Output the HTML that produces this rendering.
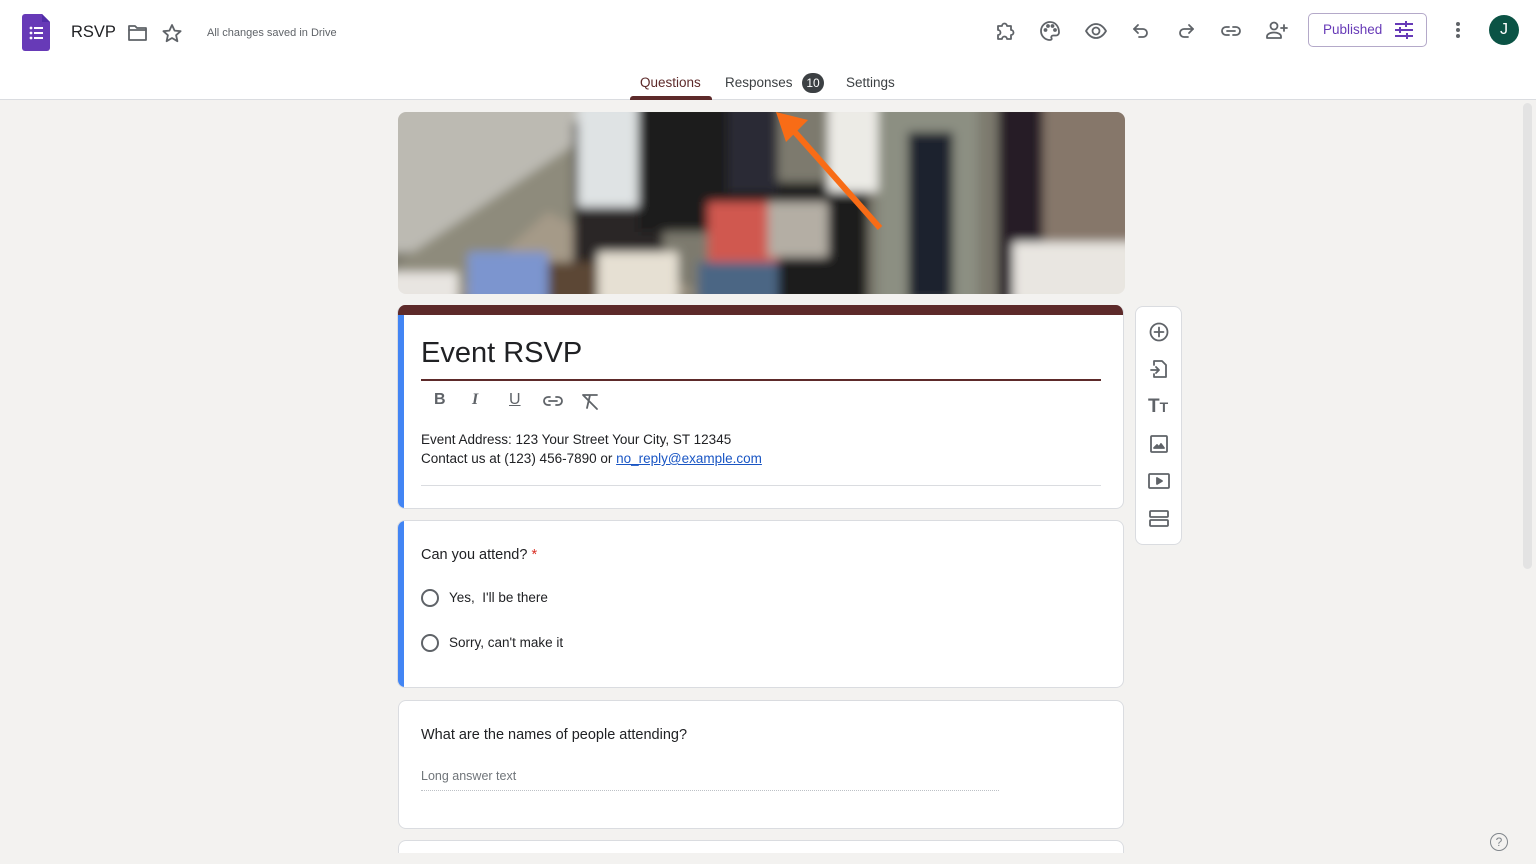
<!DOCTYPE html>
<html><head><meta charset="utf-8"><style>
*{box-sizing:border-box;margin:0;padding:0}
body{width:1536px;height:864px;overflow:hidden;background:#f3f2f0;font-family:"Liberation Sans",Arial,sans-serif;color:#202124;position:relative}
.top{position:absolute;left:0;top:0;width:1536px;height:100px;background:#fff;border-bottom:1px solid #dadce0}
.abs{position:absolute}
.ic{position:absolute;fill:none;stroke:#5f6368;stroke-width:1.8;stroke-linecap:round;stroke-linejoin:round}
.card{position:absolute;background:#fff;border:1px solid #dadce0;border-radius:8px;overflow:hidden}
.tab{position:absolute;top:75px;font-size:13.5px;color:#3c4043}
.radio{position:absolute;width:18px;height:18px;border:2px solid #5f6368;border-radius:50%}
</style></head><body>
<div class="top">
 <svg class="abs" style="left:22px;top:14px" width="28" height="37" viewBox="0 0 28 37"><path d="M3 0h17l8 8v26a3 3 0 0 1-3 3H3a3 3 0 0 1-3-3V3a3 3 0 0 1 3-3z" fill="#673ab7"/><path d="M20 0v8h8z" fill="#512da8"/><g fill="#fff"><circle cx="9" cy="14" r="1.4"/><circle cx="9" cy="19" r="1.4"/><circle cx="9" cy="24" r="1.4"/><rect x="12" y="13" width="9" height="2"/><rect x="12" y="18" width="9" height="2"/><rect x="12" y="23" width="9" height="2"/></g></svg>
 <div class="abs" style="left:71px;top:23px;font-size:16.5px">RSVP</div>
 <svg class="ic" style="left:127px;top:24px" width="22" height="18" viewBox="0 0 22 18"><path d="M2 2h6l2 2h9v12H2z"/><path d="M2 6h17"/></svg>
 <svg class="ic" style="left:161px;top:23px" width="22" height="20" viewBox="0 0 22 20"><path d="M11 2l2.6 5.6 6 .6-4.5 4 1.3 6L11 15l-5.4 3.2 1.3-6-4.5-4 6-.6z"/></svg>
 <div class="abs" style="left:207px;top:27px;font-size:11px;color:#5f6368">All changes saved in Drive</div>

 <svg class="ic" style="left:994px;top:20px" width="22" height="22" viewBox="0 0 22 22"><path d="M4 6h4a2.5 2.5 0 0 1 5 0h4v4a2.5 2.5 0 0 1 0 5v4h-4a2.5 2.5 0 0 0-5 0H4v-4a2.5 2.5 0 0 0 0-5z"/></svg>
 <svg class="ic" style="left:1039px;top:20px" width="22" height="22" viewBox="0 0 22 22"><path d="M11 2a9 9 0 0 0 0 18c1.5 0 2-1 1.5-2-.6-1 0-2.5 1.5-2.5H17a3 3 0 0 0 3-3C20 6 16 2 11 2z"/><circle cx="6.5" cy="10" r="1"/><circle cx="9" cy="6" r="1"/><circle cx="13.5" cy="6" r="1"/><circle cx="16" cy="10" r="1"/></svg>
 <svg class="ic" style="left:1084px;top:20px" width="24" height="22" viewBox="0 0 24 22"><path d="M2 11c3-5 6-7 10-7s7 2 10 7c-3 5-6 7-10 7s-7-2-10-7z"/><circle cx="12" cy="11" r="3.5"/></svg>
 <svg class="ic" style="left:1130px;top:20px" width="22" height="22" viewBox="0 0 22 22"><path d="M8 5L4 9l4 4"/><path d="M4 9h9a4 4 0 0 1 0 8H9"/></svg>
 <svg class="ic" style="left:1175px;top:20px" width="22" height="22" viewBox="0 0 22 22"><path d="M14 5l4 4-4 4"/><path d="M18 9H9a4 4 0 0 0 0 8h4"/></svg>
 <svg class="ic" style="left:1220px;top:20px" width="22" height="22" viewBox="0 0 22 22"><path d="M9 7H6a4 4 0 0 0 0 8h3M13 7h3a4 4 0 0 1 0 8h-3M7 11h8"/></svg>
 <svg class="ic" style="left:1264px;top:19px" width="26" height="22" viewBox="0 0 26 22"><circle cx="10" cy="7" r="3.5"/><path d="M3 19v-1.5c0-2.5 3.5-4 7-4s7 1.5 7 4V19z"/><path d="M20 6v6M17 9h6"/></svg>
 <div class="abs" style="left:1308px;top:13px;width:119px;height:34px;border:1px solid #b4a9c9;border-radius:5px;color:#673ab7;font-size:13.5px;padding:8px 0 0 14px">Published</div>
 <svg class="abs" style="left:1394px;top:21px" width="20" height="18" viewBox="0 0 20 18" stroke="#673ab7" stroke-width="2"><path d="M1 3h18M1 9h18M1 15h18"/><path d="M12 0v6M6 6v6M13 12v6"/></svg>
 <svg class="abs" style="left:1455px;top:21px" width="6" height="18"><g fill="#5f6368"><circle cx="3" cy="3" r="2"/><circle cx="3" cy="9" r="2"/><circle cx="3" cy="15" r="2"/></g></svg>
 <div class="abs" style="left:1489px;top:15px;width:30px;height:30px;border-radius:50%;background:#0b5345;color:#fff;font-size:16px;text-align:center;line-height:30px">J</div>

 <div class="tab" style="left:640px;color:#5d2a2a">Questions</div>
 <div class="abs" style="left:630px;top:96px;width:82px;height:4px;background:#5d2a2a;border-radius:3px 3px 0 0"></div>
 <div class="tab" style="left:725px">Responses</div>
 <div class="abs" style="left:802px;top:73px;width:22px;height:20px;border-radius:10px;background:#3c4043;color:#fff;font-size:12px;text-align:center;line-height:20px">10</div>
 <div class="tab" style="left:846px">Settings</div>
</div>

<div class="abs" style="left:1523px;top:103px;width:9px;height:466px;background:#e3e3e3;border-radius:5px"></div>

<!-- header image -->
<svg class="abs" style="left:398px;top:112px;border-radius:8px" width="727" height="182" viewBox="0 0 727 182">
<defs><filter id="b" x="0" y="0" width="100%" height="100%"><feGaussianBlur stdDeviation="5"/></filter></defs>
<g filter="url(#b)">
<rect x="-20" y="-20" width="767" height="222" fill="#7d7a6e"/>
<rect x="-20" y="-20" width="200" height="160" fill="#bcbab2"/>
<polygon points="0,150 180,30 200,182 0,182" fill="#8e8b7c"/>
<polygon points="60,182 150,100 300,182" fill="#a59a88"/>
<rect x="175" y="10" width="90" height="170" fill="#2a2728"/>
<rect x="180" y="-10" width="60" height="105" fill="#dfe3e4"/>
<rect x="240" y="-10" width="100" height="130" fill="#1e1b1c"/>
<rect x="330" y="70" width="140" height="122" fill="#1c1a1b"/>
<rect x="310" y="90" width="70" height="110" fill="#d0584f"/>
<rect x="300" y="150" width="80" height="42" fill="#4b6684"/>
<rect x="370" y="90" width="60" height="55" fill="#b4aea4"/>
<rect x="330" y="-10" width="50" height="90" fill="#2a2b35"/>
<rect x="430" y="-10" width="50" height="90" fill="#ecebe6"/>
<rect x="480" y="-10" width="100" height="202" fill="#8c8f82"/>
<rect x="510" y="20" width="45" height="170" fill="#1f222e"/>
<rect x="600" y="-10" width="90" height="202" fill="#281e26"/>
<rect x="645" y="-10" width="92" height="140" fill="#86776a"/>
<rect x="615" y="130" width="122" height="62" fill="#e9e6e1"/>
<rect x="70" y="140" width="80" height="52" fill="#7b95cf"/>
<rect x="-10" y="160" width="70" height="32" fill="#e8e5e1"/>
<rect x="150" y="150" width="70" height="42" fill="#5c4736"/>
<rect x="200" y="140" width="80" height="52" fill="#e6e0d3"/>
</g>
<line x1="482" y1="116" x2="395" y2="18" stroke="#f86c16" stroke-width="6"/>
<polygon points="378,0 410,8 388,30" fill="#f86c16"/>
</svg>

<!-- title card -->
<div class="card" style="left:397px;top:305px;width:727px;height:204px;border-top:none">
 <div style="position:absolute;left:0;top:0;width:100%;height:10px;background:#5d2a2a"></div>
 <div style="position:absolute;left:0;top:10px;width:6px;height:200px;background:#4285f4"></div>
 <div class="abs" style="left:23px;top:32px;font-size:29px">Event RSVP</div>
 <div class="abs" style="left:23px;top:74px;width:680px;height:2px;background:#5d2a2a"></div>
 <div class="abs" style="left:36px;top:86px;font-size:16px;font-weight:bold;color:#5f6368">B</div>
 <div class="abs" style="left:74px;top:86px;font-size:16px;font-style:italic;font-weight:bold;color:#5f6368;font-family:'Liberation Serif',serif">I</div>
 <div class="abs" style="left:111px;top:86px;font-size:16px;text-decoration:underline;color:#5f6368">U</div>
 <svg class="ic" style="left:144px;top:88px" width="22" height="16" viewBox="0 0 22 16"><path d="M8 4H6a4 4 0 0 0 0 8h2M14 4h2a4 4 0 0 1 0 8h-2M7 8h8"/></svg>
 <svg class="ic" style="left:183px;top:88px" width="18" height="18" viewBox="0 0 18 18"><path d="M2 2h14M9 2l-3 13M2 2l14 14"/></svg>
 <div class="abs" style="left:23px;top:125px;font-size:13.5px;line-height:19px">Event Address: 123 Your Street Your City, ST 12345<br>Contact us at (123) 456-7890 or <span style="color:#1a56c4;text-decoration:underline">no_reply@example.com</span></div>
 <div class="abs" style="left:23px;top:180px;width:680px;height:1px;background:#dadce0"></div>
</div>

<!-- side toolbar -->
<div class="card" style="left:1135px;top:306px;width:47px;height:239px">
 <svg class="ic" style="left:12px;top:14px" width="22" height="22" viewBox="0 0 22 22"><circle cx="11" cy="11" r="8.5"/><path d="M11 6.5v9M6.5 11h9"/></svg>
 <svg class="ic" style="left:12px;top:51px" width="22" height="22" viewBox="0 0 22 22"><path d="M6 7V3h8l4 4v12H6v-3"/><path d="M3 12h8M8 9l3 3-3 3"/></svg>
 <div class="abs" style="left:12px;top:89px;font-size:19px;font-weight:bold;color:#5f6368">T<span style="font-size:14px">T</span></div>
 <svg class="ic" style="left:12px;top:126px" width="22" height="22" viewBox="0 0 22 22"><rect x="3" y="3" width="16" height="16" rx="1"/><path d="M6 15l3-3 2 2 2-3 3 4z" fill="#5f6368"/></svg>
 <svg class="ic" style="left:11px;top:164px" width="24" height="20" viewBox="0 0 24 20"><rect x="2" y="3" width="20" height="14" rx="1"/><path d="M10 7v6l5-3z" fill="#5f6368"/></svg>
 <svg class="ic" style="left:11px;top:201px" width="24" height="22" viewBox="0 0 24 22"><rect x="3" y="3" width="18" height="6" rx="1"/><rect x="3" y="12" width="18" height="6" rx="1"/></svg>
</div>

<!-- question 1 -->
<div class="card" style="left:397px;top:520px;width:727px;height:168px">
 <div style="position:absolute;left:0;top:0;width:6px;height:100%;background:#4285f4"></div>
 <div class="abs" style="left:23px;top:26px;font-size:14.5px">Can you attend? <span style="color:#d93025">*</span></div>
 <div class="radio" style="left:23px;top:68px"></div>
 <div class="abs" style="left:51px;top:69px;font-size:13.5px">Yes,&nbsp; I'll be there</div>
 <div class="radio" style="left:23px;top:113px"></div>
 <div class="abs" style="left:51px;top:114px;font-size:13.5px">Sorry, can't make it</div>
</div>

<!-- question 2 -->
<div class="card" style="left:398px;top:700px;width:726px;height:129px">
 <div class="abs" style="left:22px;top:26px;font-size:14.5px">What are the names of people attending?</div>
 <div class="abs" style="left:22px;top:68px;font-size:12.5px;color:#70757a">Long answer text</div>
 <div class="abs" style="left:22px;top:89px;width:578px;height:1px;border-top:1px dotted #bdc1c6"></div>
</div>
<div class="abs" style="left:398px;top:840px;width:726px;height:13px;background:#fff;border:1px solid #dadce0;border-bottom:none;border-radius:8px 8px 0 0"></div>
<div class="abs" style="left:1490px;top:833px;width:18px;height:18px;border:1.5px solid #80868b;border-radius:50%;font-size:12px;color:#80868b;text-align:center;line-height:16px">?</div>
</body></html>
